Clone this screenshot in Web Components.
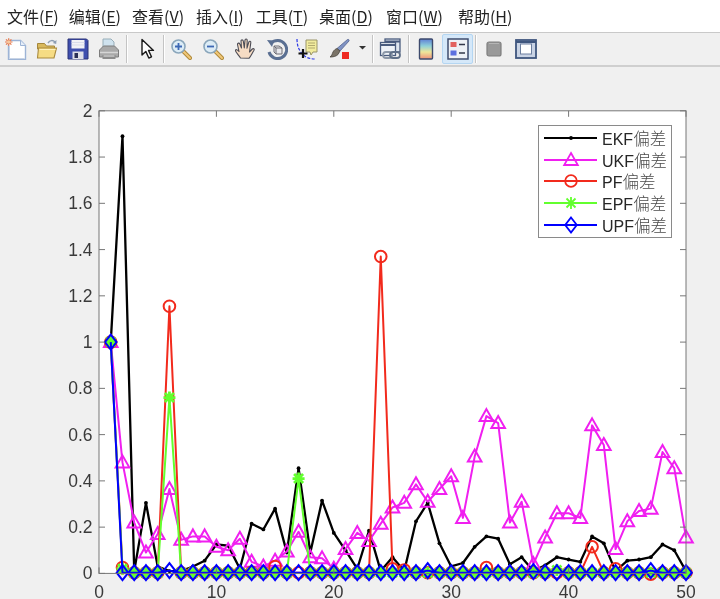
<!DOCTYPE html>
<html lang="zh"><head><meta charset="utf-8"><title>Figure</title>
<style>html,body{margin:0;padding:0;height:100%;overflow:hidden;background:#f0f0f0}</style>
</head><body>
<figure-window>
  <menu-bar>
    <menu-item k="F" style="margin-right:-1px">文件</menu-item><menu-item k="E">编辑</menu-item><menu-item k="V" style="margin-right:1px">查看</menu-item><menu-item k="I" style="margin-right:1px">插入</menu-item><menu-item k="T">工具</menu-item><menu-item k="D" style="margin-right:2px">桌面</menu-item><menu-item k="W" style="margin-right:4px">窗口</menu-item><menu-item k="H">帮助</menu-item>
  </menu-bar>
  <tool-bar>
    <tool-btn icon="new" w="31"></tool-btn><tool-btn icon="open" w="31"></tool-btn><tool-btn icon="save" w="31"></tool-btn><tool-btn icon="print" w="31"></tool-btn>
    <tool-sep l="2" r="4"></tool-sep>
    <tool-btn icon="pointer" w="31"></tool-btn>
    <tool-sep l="0" r="0"></tool-sep>
    <tool-btn icon="zoomin" w="32"></tool-btn><tool-btn icon="zoomout" w="32"></tool-btn><tool-btn icon="pan" w="32"></tool-btn><tool-btn icon="rotate" w="31"></tool-btn><tool-btn icon="cursor" w="30"></tool-btn><tool-btn icon="brush" w="33"></tool-btn><tool-btn icon="drop" w="15"></tool-btn>
    <tool-sep l="2" r="0"></tool-sep>
    <tool-btn icon="link" w="32"></tool-btn>
    <tool-sep l="2" r="0"></tool-sep>
    <tool-btn icon="colorbar" w="32"></tool-btn><tool-btn icon="legend" w="31" on></tool-btn>
    <tool-sep l="2" r="0"></tool-sep>
    <tool-btn icon="hide" w="33"></tool-btn><tool-btn icon="tools" w="31"></tool-btn>
  </tool-bar>
  <plot-axes>
    <plot-legend>
      <legend-row mark="dot" color="#000">EKF<span>偏差</span></legend-row>
      <legend-row mark="tri" color="#f01ff0">UKF<span>偏差</span></legend-row>
      <legend-row mark="circ" color="#f22a1c">PF<span>偏差</span></legend-row>
      <legend-row mark="star" color="#62ff2e">EPF<span>偏差</span></legend-row>
      <legend-row mark="dia" color="#0000ff">UPF<span>偏差</span></legend-row>
    </plot-legend>
  </plot-axes>
</figure-window>
<script>
const Plot={
  marker(t,x,y,c,w){
    const s=`fill="none" stroke="${c}" stroke-width="${w}"`;
    if(t==='dot')return `<circle cx="${x}" cy="${y}" r="1.900" fill="${c}"/>`;
    if(t==='tri')return `<path d="M${x} ${y-7}L${x+6.800} ${y+5}H${x-6.800}Z" ${s}/>`;
    if(t==='circ')return `<circle cx="${x}" cy="${y}" r="5.800" ${s}/>`;
    if(t==='star')return `<path d="M${x} ${y-6}V${y+6}M${x-6} ${y}H${x+6}M${x-4.500} ${y-4.500}L${x+4.500} ${y+4.500}M${x-4.500} ${y+4.500}L${x+4.500} ${y-4.500}" ${s}/>`;
    return `<path d="M${x} ${y-7.500}L${x+5.800} ${y}L${x} ${y+7.500}L${x-5.800} ${y}Z" ${s}/>`;
  }
};
const ICONS={
new:`<path d="M3.500 2.500h12l5 5v14h-17z" fill="#fff" stroke="#9db4d6" stroke-width="1.400"/><path d="M15.500 2.500v5h5" fill="#e6eef8" stroke="#9db4d6"/><path d="M4.500 8v12.500h15" fill="none" stroke="#c8d4e6"/><g stroke="#e8784a" stroke-width="1.200"><path d="M0 4h7.500M3.700 .2v7.500M1 1.300l5.400 5.400M6.400 1.300L1 6.700"/></g><circle cx="3.700" cy="4" r="1.800" fill="#f6c9a0"/>`,
open:`<path d="M1.500 8V5.500h7l2 2.500h8v3h-17z" fill="#d9b95c" stroke="#a5873c"/><path d="M1.500 20l1-10h18l-2.500 10z" fill="#f6dc84" stroke="#a98a3e" stroke-width="1.100"/><path d="M3.500 11.500h16" stroke="#fff2bd"/><path d="M12 5c2-3 5-3 7-1" fill="none" stroke="#8d9db2" stroke-width="1.500"/><path d="M20.500 2l-.3 4-3.400-1z" fill="#8d9db2"/>`,
save:`<path d="M1 1h18.500l1.500 1.500V21H1z" fill="#3f4fae" stroke="#2a3277"/><rect x="4.500" y="2" width="13" height="8.500" fill="#f2f2f6"/><path d="M4.500 4.500h13M4.500 7h13" stroke="#cfd3e6" stroke-width=".7"/><rect x="5.500" y="13.500" width="11" height="7.500" fill="#dfe0e8"/><rect x="7.500" y="15" width="3.500" height="5" fill="#2a2f55"/>`,
print:`<path d="M5 9V1h8l3 3v5z" fill="#cfe2ee" stroke="#98aeb9"/><path d="M1.500 12l4-4h11l4 4v7h-19z" fill="#a9a9a9" stroke="#7d7d7d"/><path d="M2 14.500h18" stroke="#d6d6d6" stroke-width="1.500"/><rect x="4.500" y="17" width="13" height="4" fill="#8c8c8c"/><path d="M5.500 18h11" stroke="#e6e6e6"/>`,
pointer:`<path d="M5 1.500v15.500l3.800-3.600 3 6.600 2.700-1.200-3-6.400h5z" fill="#fff" stroke="#1a1a1a" stroke-width="1.400" stroke-linejoin="round"/>`,
zoomin:`<path d="M13 13l7 7" stroke="#b08a3a" stroke-width="4" stroke-linecap="round"/><path d="M13.500 13.500l6.500 6.500" stroke="#f1c879" stroke-width="2" stroke-linecap="round"/><circle cx="8.500" cy="8.500" r="6.500" fill="#dcecf6" stroke="#8aa6bb" stroke-width="1.600"/><path d="M5 8.500h7M8.500 5v7" stroke="#3c68b5" stroke-width="1.800"/>`,
zoomout:`<path d="M13 13l7 7" stroke="#b08a3a" stroke-width="4" stroke-linecap="round"/><path d="M13.500 13.500l6.500 6.500" stroke="#f1c879" stroke-width="2" stroke-linecap="round"/><circle cx="8.500" cy="8.500" r="6.500" fill="#dcecf6" stroke="#8aa6bb" stroke-width="1.600"/><path d="M5 8.500h7" stroke="#3c68b5" stroke-width="1.800"/>`,
pan:`<path d="M6.500 20c-2-3-5-6-5-7.500 0-1.500 2-1 3.500 1L3.500 6.500C3.300 5 5.300 4.500 5.800 6l1.700 4-.5-7c0-1.500 2-1.500 2.300 0l1 7 .7-8c.2-1.500 2.200-1.300 2.200.2l-.2 8 1.800-6c.5-1.500 2.300-1 2 .5L15.500 14l2.800-3c1-1 2.500 0 1.700 1.300-2 3-3 6-5 8z" fill="#f6dcc4" stroke="#4c4c55" stroke-width="1.100" stroke-linejoin="round"/>`,
rotate:`<path d="M5 5.500A9 9 0 1 1 3 14" fill="none" stroke="#5a6f92" stroke-width="3"/><path d="M1 2l7 .5-2 6.500z" fill="#5a6f92"/><path d="M8 8h5l3 2v6H10l-2-2zM8 8l2 2v6M10 10h6" fill="#e8e8ec" stroke="#6c6c74"/>`,
cursor:`<path d="M10 2h11v12h-4l-2 3-1-3h-4z" fill="#f2ec9e" stroke="#9a9568"/><path d="M12 5h7M12 7.500h7M12 10h7" stroke="#a8a36a" stroke-width=".9"/><path d="M1 1c0 8 3 14 9 18 3 1.500 6 2 10 2" fill="none" stroke="#2a36e8" stroke-width="1.200" stroke-dasharray="3 1.500"/><path d="M7 11v9M2.500 15.500h9" stroke="#111" stroke-width="2.200"/>`,
brush:`<path d="M19.500 1.500c1-.5 2 .5 1.500 1.500L12 13l-3-2.500z" fill="#7f93c4" stroke="#56648f" stroke-width=".8"/><path d="M9 10.500l3 2.500-2 3.500c-2 2-5 2.500-8 2.500 2-1.500 2-3 3-5 1-2 2.500-3 4-3.500z" fill="#7b7468" stroke="#4a453e" stroke-width=".8"/><rect x="14" y="14" width="7" height="7" fill="#ee2b22"/>`,
drop:`<path d="M7 8h7l-3.500 3.500z" fill="#333"/>`,
link:`<rect x="6" y="1" width="15" height="13" fill="#dfe6ef" stroke="#4a5c7e" stroke-width="1.300"/><path d="M6 3.500h15" stroke="#4a5c7e" stroke-width="2"/><rect x="1.500" y="4.500" width="15" height="13" fill="#eef2f7" stroke="#4a5c7e" stroke-width="1.300"/><path d="M1.500 7h15" stroke="#4a5c7e" stroke-width="2"/><rect x="4" y="14" width="9" height="6" rx="3" fill="none" stroke="#8c98a8" stroke-width="1.800"/><rect x="11" y="14" width="10" height="6" rx="3" fill="none" stroke="#5f7088" stroke-width="1.800"/>`,
colorbar:`<defs><linearGradient id="cb" x1="0" y1="0" x2="0" y2="1"><stop offset="0" stop-color="#5f7fd6"/><stop offset=".35" stop-color="#8fd0d8"/><stop offset=".65" stop-color="#efe69a"/><stop offset="1" stop-color="#ef8f7a"/></linearGradient></defs><rect x="4.500" y="1" width="13" height="20" rx="1" fill="url(#cb)" stroke="#3d4a6c" stroke-width="1.400"/>`,
legend:`<rect x="1" y="1" width="20" height="20" fill="#eef1f6" stroke="#3f4c6e" stroke-width="1.500"/><rect x="3.500" y="4" width="6" height="5" fill="#e2625f"/><rect x="3.500" y="12.500" width="6" height="5" fill="#5b6fe0"/><path d="M12 6.500h6M12 15h6" stroke="#33384a" stroke-width="1.500"/>`,
hide:`<rect x="4" y="4" width="14" height="14" rx="2" fill="#999" stroke="#7f7f7f" stroke-width="1.200"/><path d="M6 5.500h10" stroke="#b5b5b5"/>`,
tools:`<rect x="1" y="2" width="20" height="18" fill="#c9d3e4" stroke="#3f567e" stroke-width="1.800"/><rect x="5.500" y="6" width="11" height="10" fill="#fff" stroke="#6c7f9f"/><path d="M1 4h20" stroke="#3f567e" stroke-width="2"/>`
};
class Base extends HTMLElement{
  constructor(){super();this.attachShadow({mode:'open'});}
}
customElements.define('figure-window',class extends Base{connectedCallback(){this.shadowRoot.innerHTML=`<style>:host{display:flex;flex-direction:column;width:720px;height:599px;overflow:hidden;background:#f0f0f0;color:#1a1a1a;filter:blur(.35px)}</style><slot></slot>`;}});
customElements.define('menu-bar',class extends Base{connectedCallback(){this.shadowRoot.innerHTML=`<style>:host{display:flex;box-sizing:border-box;height:33px;padding:0 0 0 1.500px;align-items:center;background:#fff;border-bottom:1px solid #c9c9c9;font:16px "Noto Sans CJK SC","Noto Sans",sans-serif}</style><slot></slot>`;}});
customElements.define('menu-item',class extends Base{connectedCallback(){const k=this.getAttribute('k');this.shadowRoot.innerHTML=`<style>:host{display:block;padding:0 5.500px;white-space:nowrap;color:#222}u{text-underline-offset:2px}</style><slot></slot>(<u>${k}</u>)`;}});
customElements.define('tool-bar',class extends Base{connectedCallback(){this.shadowRoot.innerHTML=`<style>:host{display:flex;box-sizing:border-box;height:34px;padding:1px 0;background:#f0f0f0;border-bottom:2px solid #cfcfcf;align-items:stretch}</style><slot></slot>`;}});
customElements.define('tool-btn',class extends Base{connectedCallback(){const n=this.getAttribute('icon');const w=this.getAttribute('w');const on=this.hasAttribute('on');this.shadowRoot.innerHTML=`<style>:host{display:flex;box-sizing:border-box;width:${w}px;align-items:center;justify-content:center;${on?'background:#d5e8f9;border:1px solid #b4d6f2;border-radius:2px;':''}}svg{display:block;flex:none}</style><svg width="22" height="22" viewBox="0 0 22 22">${ICONS[n]}</svg>`;}});
customElements.define('tool-sep',class extends Base{connectedCallback(){this.shadowRoot.innerHTML=`<style>:host{display:block;width:1px;margin:1px ${this.getAttribute('r')}px 1px ${this.getAttribute('l')}px;background:#c4c4c4;border-right:1px solid #fff}</style>`;}});
customElements.define('legend-row',class extends Base{connectedCallback(){
  const c=this.getAttribute('color'),m=this.getAttribute('mark');
  const mk=Plot.marker(m,27,11,c,1.8);
  this.shadowRoot.innerHTML=`<style>:host{display:flex;align-items:center;height:21.700px;gap:4px;white-space:nowrap;font:16px "Liberation Sans","Noto Sans CJK SC",sans-serif;color:#262626}svg{flex:none}::slotted(span){font:300 16.500px "Noto Sans CJK SC",sans-serif;color:#4a4a4a}</style><svg width="54" height="22" viewBox="0 0 54 22"><path d="M0 11h53" stroke="${c}" stroke-width="2"/>${mk}</svg><div><slot></slot></div>`;}});
customElements.define('plot-legend',class extends Base{connectedCallback(){this.shadowRoot.innerHTML=`<style>:host{position:absolute;left:538px;top:58px;box-sizing:border-box;width:134px;height:113px;padding:1px 0 0 5px;background:#fff;border:1px solid #8a8a8a;display:flex;flex-direction:column}</style><slot></slot>`;}});
const zeros=()=>Array(50).fill(.003);
const EKF=[1,1.89,.01,.305,.03,.01,.01,.03,.055,.125,.12,.02,.215,.19,.28,.09,.455,.09,.315,.175,.1,.02,.185,.01,.07,.01,.225,.305,.13,.03,.045,.115,.16,.15,.04,.07,.01,.035,.07,.06,.05,.16,.13,.01,.055,.06,.07,.125,.1,.01];
const UKF=[1,.48,.22,.09,.17,.365,.145,.16,.16,.115,.1,.15,.05,.03,.055,.095,.18,.07,.065,.02,.105,.175,.14,.215,.285,.305,.385,.31,.365,.42,.24,.505,.68,.65,.22,.31,.04,.155,.26,.26,.24,.64,.555,.105,.225,.27,.28,.525,.455,.155];
const PF=zeros();Object.entries({0:1,1:.025,5:1.155,12:.005,14:.03,23:1.37,24:.02,25:.015,32:.025,41:.115,43:.02,46:-.003}).forEach(([i,v])=>PF[+i]=v);
const EPF=zeros();Object.entries({0:1,1:.02,5:.76,16:.41,38:.015}).forEach(([i,v])=>EPF[+i]=v);
const UPF=zeros();UPF[0]=1;UPF[27]=.012;UPF[46]=.012;UPF[5]=.012;UPF[36]=.008;
customElements.define('plot-axes',class extends Base{connectedCallback(){
  const X=v=>+(99+v*11.74).toFixed(2),Y=v=>+(573.4-67-v*231.3).toFixed(2);
  const L=99,R=686,T=Y(2),B=Y(0);
  let o='';
  o+=`<rect x="${L}" y="${T}" width="${R-L}" height="${B-T}" fill="#fff"/>`;
  const series=[[EKF,'#000','dot',2.3,2],[UKF,'#f01ff0','tri',2,2],[PF,'#f22a1c','circ',2,2],[EPF,'#62ff2e','star',2,2.8],[UPF,'#0000ff','dia',2,2]];
  for(const [d,c,m,w,mw] of series){
    const pts=d.map((v,i)=>[X(i+1),Y(v)]);
    o+=`<polyline points="${pts.map(p=>p.join(',')).join(' ')}" fill="none" stroke="${c}" stroke-width="${w}" stroke-linejoin="round"/>`;
    o+=pts.map(p=>Plot.marker(m,p[0],p[1],c,mw)).join('');
  }
  const ax='#777';
  o+=`<rect x="${L}" y="${T}" width="${R-L}" height="${B-T}" fill="none" stroke="${ax}" stroke-width="1"/>`;
  for(let i=0;i<=10;i++){const y=Y(i*.2);
    o+=`<path d="M${L} ${y}h6M${R} ${y}h-6" stroke="${ax}"/>`;
    o+=`<text x="92.500" y="${y+6}" text-anchor="end">${i===0?'0':i===5?'1':i===10?'2':(i*.2).toFixed(1)}</text>`;}
  for(let i=0;i<=5;i++){const x=X(i*10);
    o+=`<path d="M${x} ${B}v-6M${x} ${T}v6" stroke="${ax}"/>`;
    o+=`<text x="${x}" y="531" text-anchor="middle">${i*10}</text>`;}
  this.shadowRoot.innerHTML=`<style>:host{display:block;position:relative;flex:1;min-height:0;background:#f0f0f0}svg{display:block;position:absolute;left:0;top:0}text{font:17.500px "Liberation Sans",sans-serif;fill:#3a3a3a}</style><svg width="720" height="532" viewBox="0 0 720 532">${o}</svg><slot></slot>`;
}});
</script>
</body></html>
